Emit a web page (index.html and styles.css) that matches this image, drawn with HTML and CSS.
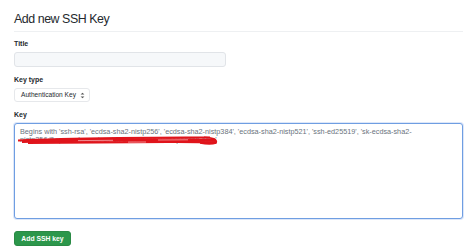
FILE: index.html
```html
<!DOCTYPE html>
<html lang="en">
<head>
<meta charset="utf-8">
<title>Add new SSH Key</title>
<link rel="stylesheet" href="styles.css">
</head>
<body>
<div class="page">
  <div class="subhead">
    <h2 class="subhead-title">Add new SSH Key</h2>
  </div>
  <form class="form">
    <div class="form-group">
      <label class="label" for="title">Title</label>
      <input class="input" id="title" type="text">
    </div>
    <div class="form-group">
      <label class="label" for="type">Key type</label>
      <div class="select">
        <span class="select-text">Authentication Key</span>
        <svg class="select-arrows" width="5" height="7" viewBox="0 0 5 7"><path d="M0.6 2.6 L2.5 0.8 L4.4 2.6 Z M0.6 4.4 L2.5 6.2 L4.4 4.4 Z" fill="#555"/></svg>
      </div>
    </div>
    <div class="form-group">
      <label class="label" for="key">Key</label>
      <div class="textarea-wrap">
        <textarea class="textarea" id="key" placeholder="Begins with 'ssh-rsa', 'ecdsa-sha2-nistp256', 'ecdsa-sha2-nistp384', 'ecdsa-sha2-nistp521', 'ssh-ed25519', 'sk-ecdsa-sha2-nistp256@openssh.com', or 'sk-ssh-ed25519@openssh.com'"></textarea>
        <svg class="scribble" width="202" height="12" viewBox="0 0 202 12">
          <path d="M0 6.5 C30 5.2 60 4.6 100 4 C130 3.6 160 3.2 192 3.6" stroke="#e0141b" stroke-width="2" fill="none"/>
          <path d="M4 7.5 C40 6.6 80 6.2 120 5.8 C150 5.5 175 5.4 198 6.4" stroke="#e0141b" stroke-width="3" fill="none"/>
          <path d="M10 9 C60 8.4 110 8 150 7.8 C170 7.7 185 7.8 198 8.6" stroke="#e0141b" stroke-width="2.2" fill="none"/>
          <path d="M60 6.6 L95 6.3 M140 6 L170 5.8 M110 8.1 L128 8" stroke="#ffffff" stroke-width="0.6" fill="none" opacity="0.85"/>
          <path d="M186 3.2 C194 3.2 200 5.5 198 9 C194 10.3 188 10 182 9" stroke="#e0141b" stroke-width="1.6" fill="none"/>
        </svg>
      </div>
    </div>
    <div class="form-actions">
      <button class="btn-primary" type="button">Add SSH key</button>
    </div>
  </form>
</div>
</body>
</html>
```

FILE: styles.css
```css
* { box-sizing: border-box; }
html, body { margin: 0; padding: 0; background: #ffffff; }
body {
  font-family: "Liberation Sans", Arial, Helvetica, sans-serif;
  color: #24292e;
}
.page {
  padding: 11px 11px 0 14px;
  width: 474px;
}
.subhead {
  border-bottom: 1px solid #eef0f2;
  padding-bottom: 4px;
}
.subhead-title {
  margin: 0;
  font-size: 12.4px;
  line-height: 16px;
  font-weight: 400;
  letter-spacing: -0.45px;
  color: #24292e;
}
.form { display: flex; flex-direction: column; }
.form-group { display: flex; flex-direction: column; align-items: flex-start; }
.label {
  font-size: 7px;
  font-weight: 700;
  line-height: 8px;
  color: #24292e;
  margin-bottom: 4px;
}
.form-group:first-child .label { margin-top: 8px; }
.input {
  width: 212px;
  height: 15px;
  background: #f6f8fa;
  border: 1px solid #e1e4e8;
  border-radius: 3px;
  margin: 0 0 9px 0;
  padding: 0 4px;
  font-size: 7px;
  outline: none;
}
.select {
  width: 76px;
  height: 14px;
  border: 1px solid #e6e8eb;
  border-radius: 3px;
  background: #ffffff;
  display: flex;
  align-items: center;
  justify-content: space-between;
  padding: 0 4px 0 6px;
  margin-bottom: 9px;
}
.select-text {
  font-size: 6.6px;
  color: #24292e;
  line-height: 1;
}
.select-arrows { display: block; }
.textarea-wrap {
  position: relative;
  width: 449px;
  height: 96px;
}
.textarea {
  display: block;
  width: 100%;
  height: 100%;
  resize: none;
  border: 1px solid #6f9ee2;
  border-radius: 3px;
  box-shadow: 0 0 0 1px rgba(120, 160, 230, 0.25);
  padding: 4px 5px;
  font-family: "Liberation Sans", Arial, Helvetica, sans-serif;
  font-size: 7.25px;
  line-height: 7.5px;
  outline: none;
  background: #fff;
}
.textarea::placeholder { color: #6a737d; }
.scribble {
  position: absolute;
  left: 4px;
  top: 11px;
}
.form-actions { margin-top: 8px; }
.btn-primary {
  width: 57px;
  height: 15px;
  padding: 0;
  border: 1px solid #2a8a45;
  border-radius: 3px;
  background: #2c974b;
  color: #ffffff;
  font-family: "Liberation Sans", Arial, Helvetica, sans-serif;
  font-size: 6.8px;
  font-weight: 700;
  line-height: 13px;
}
```
